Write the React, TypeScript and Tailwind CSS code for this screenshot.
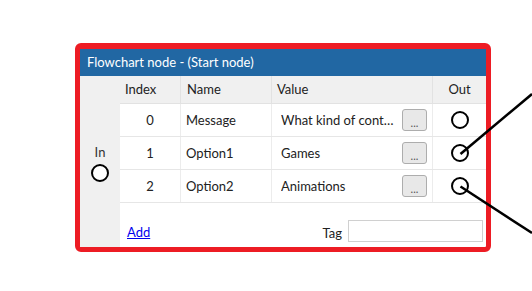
import { useState } from 'react';

type Row = { index: number; name: string; value: string };

const rows: Row[] = [
  { index: 0, name: 'Message', value: 'What kind of content do you like?' },
  { index: 1, name: 'Option1', value: 'Games' },
  { index: 2, name: 'Option2', value: 'Animations' },
];

const cols = 'grid grid-cols-[61px_91px_161px_53px]';

function Port() {
  return <div className="w-[18px] h-[18px] rounded-full border-2 border-black bg-white" />;
}

export default function App() {
  const [tag, setTag] = useState('');

  return (
    <div
      className="relative w-[532px] h-[291px] bg-white text-[13px] text-[#222]"
      style={{ fontFamily: 'Lato, "Noto Sans", sans-serif' }}
    >
      <div className="pl-[75px] pt-[43px]">
        <div className="w-[416px] h-[209px] border-[5px] border-t-[6px] border-[#ed1c24] rounded-[6px] flex flex-col bg-white">
          {/* Header */}
          <div className="h-[27px] bg-[#2167a3] text-white flex items-center pl-[7px] pt-[1px] shrink-0">
            Flowchart node - (Start node)
          </div>

          <div className="flex flex-1">
            {/* In column */}
            <div className="w-[40px] bg-[#f0f0f0] flex flex-col items-center justify-center gap-[5px] pt-[4px]">
              <span className="text-[13px] leading-none text-[#333]">In</span>
              <Port />
            </div>

            <div className="flex-1 flex flex-col">
              {/* Column headings */}
              <div className={`${cols} h-[28px] bg-[#f0f0f0] border-b border-[#e2e2e2]`}>
                <div className="flex items-center pl-[5px] pt-[1px] border-r border-[#e2e2e2]">Index</div>
                <div className="flex items-center pl-[6px] pt-[1px] border-r border-[#e2e2e2]">Name</div>
                <div className="flex items-center pl-[5px] pt-[1px] border-r border-[#e2e2e2]">Value</div>
                <div className="flex items-center justify-center pt-[1px]">Out</div>
              </div>

              {rows.map((r) => (
                <div key={r.index} className={`${cols} h-[33px] border-b border-[#e6e6e6]`}>
                  <div className="flex items-center justify-center pt-[2px] border-r border-[#ececec]">{r.index}</div>
                  <div className="flex items-center pl-[5px] pt-[2px] border-r border-[#ececec]">{r.name}</div>
                  <div className="flex items-center pl-[9px] pr-[5px] gap-[3px] border-r border-[#ececec]">
                    <span className="flex-1 min-w-0 truncate pt-[2px]">{r.value}</span>
                    <button className="w-[25px] h-[22px] shrink-0 rounded-[3px] border border-[#adadad] bg-[#e8e8e8] text-[11px] leading-none pt-[5px] text-[#555]">
                      ...
                    </button>
                  </div>
                  <div className="flex items-center justify-center">
                    <Port />
                  </div>
                </div>
              ))}

              {/* Footer */}
              <div className="flex-1 flex items-end justify-between pl-[7px] pr-[3px] pb-[4px]">
                <a href="#" className="text-[#0000ee] underline mb-[1px]">
                  Add
                </a>
                <label className="flex items-center gap-[6px]">
                  <span className="mt-[4px]">Tag</span>
                  <input
                    value={tag}
                    onChange={(e) => setTag(e.target.value)}
                    className="w-[135px] h-[22px] border border-[#d0d0d0] bg-white outline-none px-[3px]"
                  />
                </label>
              </div>
            </div>
          </div>
        </div>
      </div>

      {/* Connection lines */}
      <svg className="absolute inset-0 pointer-events-none" width="532" height="291">
        <line x1="460.5" y1="154" x2="532" y2="94" stroke="#000" strokeWidth="2.5" />
        <line x1="460.5" y1="186.5" x2="532" y2="233" stroke="#000" strokeWidth="2.5" />
      </svg>
    </div>
  );
}
